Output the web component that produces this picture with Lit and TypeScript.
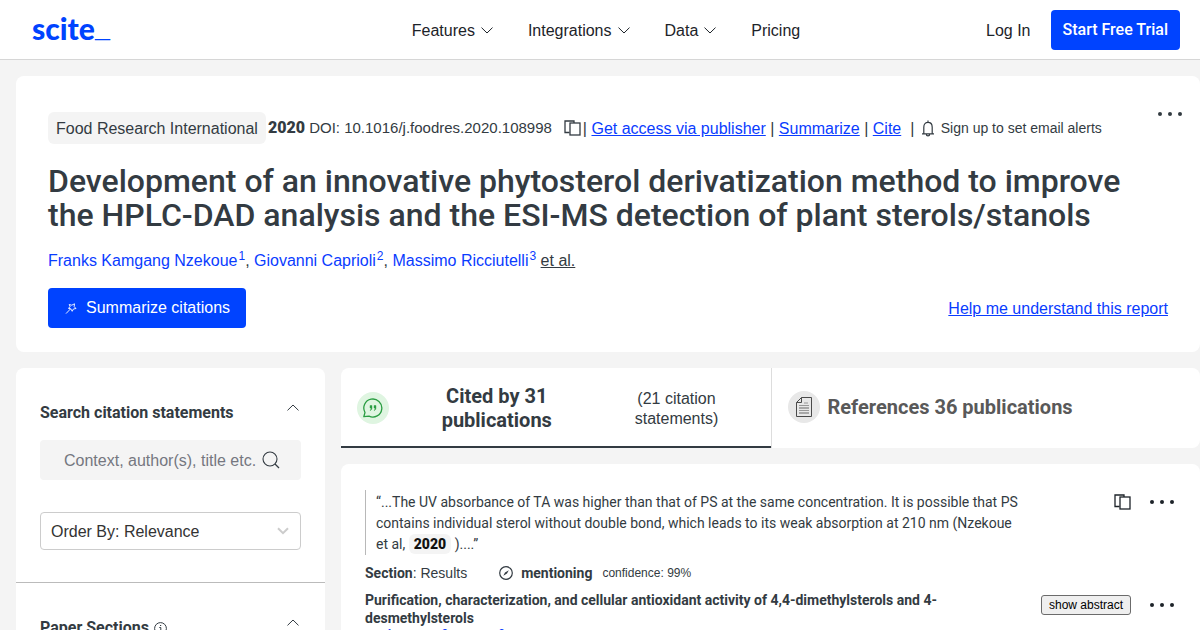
import { LitElement, html, css } from "lit";
import { customElement } from "lit/decorators.js";

const chevron = (cls: string) => html`<svg class=${cls} viewBox="0 0 12 7" width="12" height="7" aria-hidden="true">
  <path d="M0.5 0.6 6 6 11.5 0.6" fill="none" stroke="currentColor" /></svg>`;

const dots = html`<svg viewBox="0 0 24 4" width="24" height="4" aria-hidden="true">
  <g fill="currentColor"><circle cx="2" cy="2" r="2" /><circle cx="12" cy="2" r="2" /><circle cx="22" cy="2" r="2" /></g></svg>`;

const copy = html`<svg viewBox="0 0 17 16" width="17" height="16" aria-hidden="true">
  <path d="M5.5 12.5H1V1H10V3" fill="none" stroke="currentColor" stroke-width="1.3" />
  <rect x="6" y="3" width="10" height="12" fill="none" stroke="currentColor" stroke-width="1.3" /></svg>`;

@customElement("app-root")
export class AppRoot extends LitElement {
  static styles = css`
    :host {
      display: block;
      height: 100vh;
      overflow: hidden;
      background: #f4f4f4;
      color: #333b42;
      font: 16px/20px "Liberation Sans", Arial, sans-serif;
    }
    * { box-sizing: border-box; }
    h1, h2, h3, p, blockquote { margin: 0; }
    svg { display: block; flex: none; }
    a { color: #0a3cff; }
    button { font: inherit; color: inherit; cursor: pointer; }
    .bar {
      display: grid;
      grid-template-columns: 1fr auto 1fr;
      align-items: center;
      height: 60px;
      padding: 0 20px 0 32px;
      background: #fff;
      border-bottom: 1px solid #d6d6d6;
      color: #1d2329;
    }
    .logo {
      color: #0043ff;
      font: 900 30px/40px Lato, sans-serif;
      text-decoration: none;
      padding-bottom: 4px;
    }
    .logo-line { font: 700 27px/20px "Liberation Sans", Arial, sans-serif; vertical-align: 3px; }
    .nav { display: flex; gap: 35px; padding-top: 2px; }
    .nav-item {
      display: flex;
      align-items: center;
      gap: 6px;
      padding: 0;
      border: 0;
      background: none;
      color: inherit;
      text-decoration: none;
    }
    .account { display: flex; align-items: center; justify-content: flex-end; gap: 20px; }
    .login { padding-top: 2px; color: inherit; text-decoration: none; }
    .trial {
      height: 40px;
      padding: 0 12px;
      border: 0;
      border-radius: 4px;
      background: #0043ff;
      color: #fff;
      font: 500 16px/20px Roboto, sans-serif;
    }
    .page { display: grid; gap: 16px; padding: 16px 0 0 16px; }
    .card { background: #fff; border-radius: 8px; }
    .paper { padding: 36px 32px 24px; }
    .paper-top { display: flex; justify-content: space-between; margin-right: -16px; }
    .meta { display: flex; align-items: center; white-space: pre; }
    .journal { padding: 7px 8px 5px; margin-right: 2px; border-radius: 6px; background: #f4f4f4; }
    .doi { font-size: 15px; }
    .strong { font-family: Roboto, sans-serif; font-weight: 700; }
    .black { font-family: Roboto, sans-serif; font-weight: 900; }
    .icon-btn { display: inline-flex; align-items: center; justify-content: center; padding: 0; border: 0; background: none; }
    .more { width: 28px; height: 20px; }
    .paper-more { margin-top: -8px; }
    .doi-copy { margin: 0 2px 0 12px; }
    .links { padding-top: 2px; }
    .alerts { display: flex; align-items: center; gap: 6px; padding: 0; border: 0; background: none; font-size: 14px; margin-left: 2px; }
    .title { margin-top: 20px; font: 500 32px/34px Roboto, sans-serif; }
    .authors { margin-top: 19px; }
    .author { text-decoration: none; }
    .authors sup, .source-authors sup { font-size: 12px; line-height: 0; margin-left: 1px; }
    .etal { padding: 0; border: 0; background: none; text-decoration: underline; }
    .actions { display: flex; justify-content: space-between; align-items: center; margin-top: 17px; }
    .help { padding-top: 2px; }
    .summarize {
      display: flex;
      align-items: center;
      gap: 8px;
      height: 40px;
      padding: 0 16px;
      border: 0;
      border-radius: 4px;
      background: #0043ff;
      color: #fff;
    }
    .columns { display: grid; grid-template-columns: 309px 1fr; gap: 16px; align-items: start; }
    .filter { padding: 32px 24px; }
    .filter + .filter { border-top: 1px solid #bbb; }
    .filter-head { display: flex; justify-content: space-between; align-items: start; padding-top: 2px; font: 700 16px/22px Roboto, sans-serif; }
    .filter-name { display: flex; align-items: center; gap: 5px; font: inherit; }
    .toggle { width: 16px; height: 10px; }
    .up { transform: rotate(180deg); }
    .search { display: flex; align-items: center; height: 40px; margin-top: 16px; padding: 0 21px 0 24px; border-radius: 4px; background: #f4f4f4; }
    .search-input { flex: 1; min-width: 0; height: 22px; padding: 2px 0 0; border: 0; outline: 0; background: none; font: inherit; }
    .search-input::placeholder { color: #757780; opacity: 1; }
    .order { display: grid; align-items: center; margin-top: 32px; color: #ccc; }
    .order > * { grid-area: 1 / 1; }
    .order-select {
      appearance: none;
      width: 100%;
      height: 38px;
      padding: 2px 10px 0;
      border: 1px solid #ccc;
      border-radius: 4px;
      background: #fff;
      color: #333;
      font: inherit;
    }
    .order-mark { justify-self: end; margin-right: 12px; pointer-events: none; }
    .results { display: grid; gap: 16px; }
    .tabs { display: grid; grid-template-columns: 1fr 1fr; height: 80px; overflow: hidden; border-bottom-left-radius: 0; }
    .tab { display: flex; align-items: center; padding: 2px 16px 0; border: 0; background: none; }
    .tab-on { border-bottom: 2px solid #333b42; }
    .tab-off { gap: 8px; padding: 0 16px 2px; border-left: 1px solid #ddd; color: #595959; }
    .tab-label { flex: 1; padding: 0 40px; font: 700 20px/24px Roboto, sans-serif; }
    .tab-off .tab-label { flex: none; padding: 0; }
    .tab-count { flex: none; width: 144px; padding: 2px 24px 0; margin-right: 6px; }
    .disc { display: grid; place-items: center; flex: none; width: 32px; height: 32px; border-radius: 50%; background: #dff5e1; color: #2a9d42; }
    .disc-grey { background: #e8e8e8; color: #4a4a4a; }
    .statement { padding: 26px 24px 24px; font-size: 14px; }
    .row { display: flex; justify-content: space-between; align-items: flex-start; gap: 24px; }
    .quote { max-width: 654px; padding: 2px 0 0 10px; border-left: 1px solid #b8b8b8; font-family: Roboto, sans-serif; line-height: 21px; }
    .year { padding: 2px 5px; border-radius: 6px; background: #f4f4f4; color: #111; font-weight: 900; }
    .tools { display: flex; align-items: center; gap: 17px; height: 24px; color: #1d2329; }
    .source .tools { height: 28px; }
    .facts { display: flex; align-items: center; margin-top: 8px; }
    .kind { display: flex; align-items: center; gap: 8px; margin-left: 32px; }
    .confidence { margin-left: 10px; font-size: 12px; }
    .source { margin-top: 8px; }
    .source-title { max-width: 600px; font: 700 14px/18px Roboto, sans-serif; }
    .source-authors { margin-top: 2px; }
    .abstract { height: 20px; padding: 0 7px; border: 1px solid #6b6b6b; border-radius: 3px; background: #efefef; color: #000; font-size: 12px; line-height: 16px; }
  `;

  render() {
    return html`
      <header class="bar">
        <a class="logo" href="#">scite<span class="logo-line">_</span></a>
        <nav class="nav">
          ${["Features", "Integrations", "Data"].map((t) => html`<button class="nav-item">${t}${chevron("")}</button>`)}
          <a class="nav-item" href="#">Pricing</a>
        </nav>
        <div class="account">
          <a class="login" href="#">Log In</a>
          <button class="trial">Start Free Trial</button>
        </div>
      </header>
      <main class="page">
        <section class="card paper">
          <div class="paper-top">
            <div class="meta"><span class="journal">Food Research International</span><span class="black">2020</span><span class="doi"> DOI: 10.1016/j.foodres.2020.108998</span><button class="icon-btn doi-copy" aria-label="Copy DOI">${copy}</button><span class="links">| <a href="#">Get access via publisher</a> | <a href="#">Summarize</a> | <a href="#">Cite</a>  | </span><button class="alerts"><svg viewBox="0 0 14 17" width="14" height="17" aria-hidden="true"><path d="M1 13.8H13M2.8 13.5V7.2C2.8 4.2 4.6 2.4 7 2.4S11.2 4.2 11.2 7.2V13.5M7 2.4V0.6M5.3 14C5.3 16.6 8.7 16.6 8.7 14" fill="none" stroke="currentColor" stroke-width="1.2" /></svg>Sign up to set email alerts</button></div>
            <button class="icon-btn more paper-more" aria-label="More">${dots}</button>
          </div>
          <h1 class="title">Development of an innovative phytosterol derivatization method to improve the HPLC-DAD analysis and the ESI-MS detection of plant sterols/stanols</h1>
          <p class="authors"><a class="author" href="#">Franks Kamgang Nzekoue<sup>1</sup></a>, <a class="author" href="#">Giovanni Caprioli<sup>2</sup></a>, <a class="author" href="#">Massimo Ricciutelli<sup>3</sup></a> <button class="etal">et al.</button></p>
          <div class="actions">
            <button class="summarize">
              <svg viewBox="0 0 14 14" width="14" height="14" aria-hidden="true"><path d="M2 12.6 6.6 7.8M5.2 3.5 7.8 4.2 10.5 2.8 10.2 5.6 12 7.5 9.4 8 8.2 10.3 6.8 7.8 4.4 7.3 6.2 5.7Z" fill="none" stroke="currentColor" stroke-width="0.9" /></svg>
              Summarize citations
            </button>
            <a class="help" href="#">Help me understand this report</a>
          </div>
        </section>
        <div class="columns">
          <aside class="card">
            <section class="filter">
              <div class="filter-head">
                <label for="search">Search citation statements</label>
                <button class="icon-btn toggle" aria-label="Collapse search">${chevron("up")}</button>
              </div>
              <div class="search">
                <input class="search-input" id="search" placeholder="Context, author(s), title etc." />
                <svg viewBox="0 0 18 18" width="18" height="18" aria-hidden="true"><circle cx="8" cy="8" r="7" fill="none" stroke="currentColor" stroke-width="1.1" /><path d="M13 13 17 17" stroke="currentColor" stroke-width="1.3" /></svg>
              </div>
              <div class="order">
                <select class="order-select" aria-label="Order by"><option>Order By: Relevance</option></select>
                <svg class="order-mark" viewBox="0 0 12 8" width="12" height="8" aria-hidden="true"><path d="M1 1.2 6 6.2 11 1.2" fill="none" stroke="currentColor" stroke-width="2" /></svg>
              </div>
            </section>
            <section class="filter">
              <div class="filter-head">
                <h2 class="filter-name">Paper Sections
                  <svg viewBox="0 0 13 13" width="13" height="13" aria-hidden="true"><circle cx="6.5" cy="6.5" r="5.9" fill="none" stroke="currentColor" /><path d="M5.3 5.5H6.8V9.5M5 9.7H8.4M6 3.5H7.2" fill="none" stroke="currentColor" /></svg>
                </h2>
                <button class="icon-btn toggle" aria-label="Collapse sections">${chevron("up")}</button>
              </div>
            </section>
          </aside>
          <div class="results">
            <div class="card tabs">
              <button class="tab tab-on">
                <span class="disc"><svg viewBox="0 0 20 20" width="20" height="20" aria-hidden="true"><path d="M0.8 18.6 2 14.5A9 9 0 1 1 6 18.2Z" fill="none" stroke="currentColor" stroke-width="1.3" stroke-linejoin="round" /><path d="M7 7.5H9V9.8C9 11.3 8.3 12.3 7.2 12.6C7.8 11.8 8 11 8 10H7ZM11 7.5H13V9.8C13 11.3 12.3 12.3 11.2 12.6C11.8 11.8 12 11 12 10H11Z" fill="currentColor" stroke="currentColor" stroke-width="0.4" /></svg></span>
                <span class="tab-label">Cited by 31 publications</span>
                <span class="tab-count">(21 citation statements)</span>
              </button>
              <button class="tab tab-off">
                <span class="disc disc-grey"><svg viewBox="0 0 16 20" width="16" height="20" aria-hidden="true"><path d="M5.5 0.5H15.5V19.5H0.5V5.5ZM5.5 0.5V5.5H0.5" fill="none" stroke="currentColor" /><path d="M8 6H12M3 8.5H13M3 13.5H13" stroke="currentColor" stroke-opacity="0.5" /><path d="M3 11H13M3 16H13" stroke="currentColor" stroke-opacity="0.8" /></svg></span>
                <span class="tab-label">References 36 publications</span>
              </button>
            </div>
            <article class="card statement">
              <div class="row">
                <blockquote class="quote">“...The UV absorbance of TA was higher than that of PS at the same concentration. It is possible that PS contains individual sterol without double bond, which leads to its weak absorption at 210 nm (Nzekoue et al, <span class="year">2020</span> )....”</blockquote>
                <div class="tools">
                  <button class="icon-btn" aria-label="Copy statement">${copy}</button>
                  <button class="icon-btn more" aria-label="More">${dots}</button>
                </div>
              </div>
              <div class="facts">
                <span><b class="strong">Section</b>: Results</span>
                <span class="kind strong"><svg viewBox="0 0 14 14" width="14" height="14" aria-hidden="true"><circle cx="7" cy="7" r="6.3" fill="none" stroke="currentColor" stroke-width="1.2" /><path d="M4.3 9.8 6 6.6 9.8 4.2 8 7.4Z" fill="currentColor" /></svg>mentioning</span>
                <span class="confidence">confidence: 99%</span>
              </div>
              <div class="row source">
                <div>
                  <h3 class="source-title">Purification, characterization, and cellular antioxidant activity of 4,4-dimethylsterols and 4-desmethylsterols</h3>
                  <p class="source-authors"><a class="author" href="#">Xia<sup>1</sup></a>, <a class="author" href="#">Zhang<sup>2</sup></a>, <a class="author" href="#">Cheng<sup>2</sup></a></p>
                </div>
                <div class="tools">
                  <button class="abstract">show abstract</button>
                  <button class="icon-btn more" aria-label="More">${dots}</button>
                </div>
              </div>
            </article>
          </div>
        </div>
      </main>
    `;
  }
}
